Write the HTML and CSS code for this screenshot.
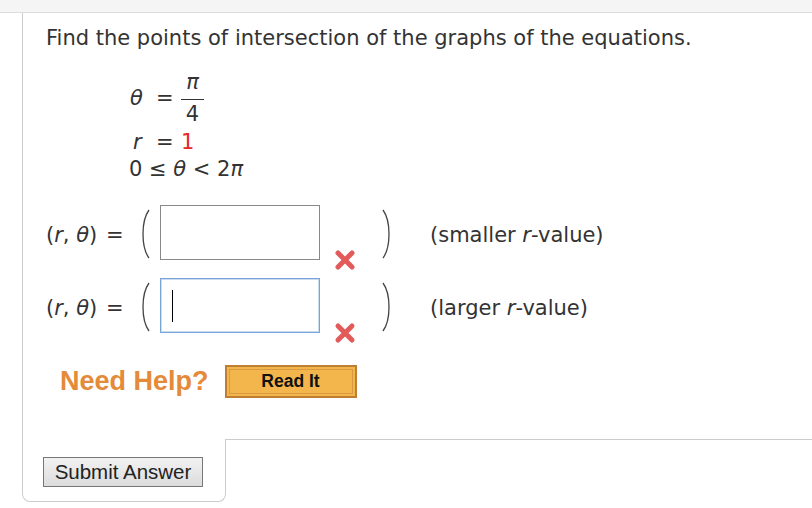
FILE: index.html
```html
<!DOCTYPE html>
<html>
<head>
<meta charset="utf-8">
<link rel="stylesheet" href="styles.css">
</head>
<body>
<div class="topbar"></div>
<div class="page">
  <div class="panel">
    <p class="question">Find the points of intersection of the graphs of the equations.</p>
    <div class="eqs">
      <div class="eq eq-frac">
        <span class="var"><i>θ</i></span>
        <span class="op">=</span>
        <span class="frac"><span class="num"><i>π</i></span><span class="den">4</span></span>
      </div>
      <div class="eq eq-r">
        <span class="var var-r"><i>r</i></span>
        <span class="op">=</span>
        <span class="red">1</span>
      </div>
      <div class="eq eq-range">0 ≤ <i>θ</i> &lt; 2<i>π</i></div>
    </div>

    <div class="answer first">
      <span class="lhs">(<i>r</i>, <i>θ</i>) <span class="eqsign">=</span></span>
      <svg class="paren" width="12" height="50" viewBox="0 0 12 50"><path d="M10 1 C2 12 2 38 10 49" fill="none" stroke="#444" stroke-width="1.3"/></svg>
      <span class="input"></span>
      <svg class="xmark" width="22" height="22" viewBox="0 0 22 22"><path d="M4 4 L18 18 M18 4 L4 18" stroke="#e25a5a" stroke-width="5" stroke-linecap="round"/></svg>
      <svg class="paren rparen" width="12" height="50" viewBox="0 0 12 50"><path d="M2 1 C10 12 10 38 2 49" fill="none" stroke="#444" stroke-width="1.3"/></svg>
      <span class="note">(smaller <i>r</i>-value)</span>
    </div>

    <div class="answer">
      <span class="lhs">(<i>r</i>, <i>θ</i>) <span class="eqsign">=</span></span>
      <svg class="paren" width="12" height="50" viewBox="0 0 12 50"><path d="M10 1 C2 12 2 38 10 49" fill="none" stroke="#444" stroke-width="1.3"/></svg>
      <span class="input focused"><span class="caret"></span></span>
      <svg class="xmark" width="22" height="22" viewBox="0 0 22 22"><path d="M4 4 L18 18 M18 4 L4 18" stroke="#e25a5a" stroke-width="5" stroke-linecap="round"/></svg>
      <svg class="paren rparen" width="12" height="50" viewBox="0 0 12 50"><path d="M2 1 C10 12 10 38 2 49" fill="none" stroke="#444" stroke-width="1.3"/></svg>
      <span class="note">(larger <i>r</i>-value)</span>
    </div>

    <div class="help">
      <span class="need">Need Help?</span>
      <span class="readit"><span class="readit-inner">Read It</span></span>
    </div>
  </div>
  <div class="submit-box">
    <button class="submit">Submit Answer</button>
  </div>
</div>
</body>
</html>
```
FILE: styles.css
```css
* { box-sizing: border-box; }
body {
  margin: 0;
  font-family: "DejaVu Sans", Verdana, sans-serif;
  color: #333;
  background: #fff;
}
.topbar {
  height: 13px;
  background: #f5f5f5;
  border-bottom: 1px solid #ddd;
}
.page { padding-left: 22px; }
.panel {
  border-left: 1px solid #ccc;
  border-bottom: 1px solid #ccc;
  height: 427px;
  padding: 13px 0 0 23px;
}
.question {
  margin: 0;
  font-size: 21px;
  line-height: 24px;
}
.eqs {
  margin-top: 20px;
  font-size: 21px;
  line-height: 24px;
}
.eq {
  display: flex;
  align-items: center;
  margin-left: 84px;
}
.var { width: 26px; }
.var-r { padding-left: 3px; }
.op { width: 25px; }
.frac {
  display: inline-flex;
  flex-direction: column;
  align-items: center;
  width: 23px;
}
.num {
  display: block;
  height: 29px;
  line-height: 24px;
}
.den {
  display: block;
  width: 23px;
  text-align: center;
  border-top: 1px solid #333;
  padding-top: 2px;
  line-height: 24px;
}
.red { color: #e8261c; }
.eq-r { margin-top: 4px; }
.eq-range {
  margin-top: 3px;
  margin-left: 83px;
  white-space: pre;
}
.answer {
  display: flex;
  align-items: flex-start;
  height: 73px;
  font-size: 21px;
}
.answer.first { margin-top: 24px; }
.lhs {
  width: 93px;
  margin-top: 18px;
  white-space: pre;
}
.eqsign { margin-left: 2px; }
.paren { margin-top: 4px; }
.input {
  width: 160px;
  height: 55px;
  border: 1px solid #888;
  margin-left: 9px;
  position: relative;
}
.input.focused {
  border: 1px solid #7ba4d6;
  box-shadow: inset 0 0 0 1px #c9dcf2;
}
.caret {
  position: absolute;
  left: 11px;
  top: 11px;
  width: 1px;
  height: 32px;
  background: #000;
}
.xmark { margin: 44px 0 0 14px; }
.rparen { margin-left: 25px; }
.note {
  margin: 18px 0 0 37px;
}
.help {
  display: flex;
  align-items: center;
  margin: 14px 0 0 14px;
}
.need {
  font-family: "Liberation Sans", Arial, sans-serif;
  font-weight: bold;
  font-size: 27px;
  color: #e48a38;
}
.readit {
  margin-left: 16px;
  width: 132px;
  height: 33px;
  border: 2px solid #bf7f33;
  background: #f3b64c;
  padding: 2px;
}
.readit-inner {
  display: flex;
  align-items: center;
  justify-content: center;
  height: 100%;
  border: 1px solid #d99a44;
  font-family: "Liberation Sans", Arial, sans-serif;
  font-weight: bold;
  font-size: 17.5px;
  color: #111;
}
.submit-box {
  width: 204px;
  height: 63px;
  margin-top: -1px;
  background: #fff;
  border: 1px solid #ccc;
  border-top: none;
  border-radius: 0 0 8px 8px;
  padding: 18px 0 0 20px;
}
.submit {
  font-family: "Liberation Sans", Arial, sans-serif;
  font-size: 20.5px;
  color: #222;
  width: 160px;
  height: 30px;
  padding: 0;
  border: 1px solid #777;
  background: linear-gradient(#f2f2f2, #dcdcdc);
}
```
